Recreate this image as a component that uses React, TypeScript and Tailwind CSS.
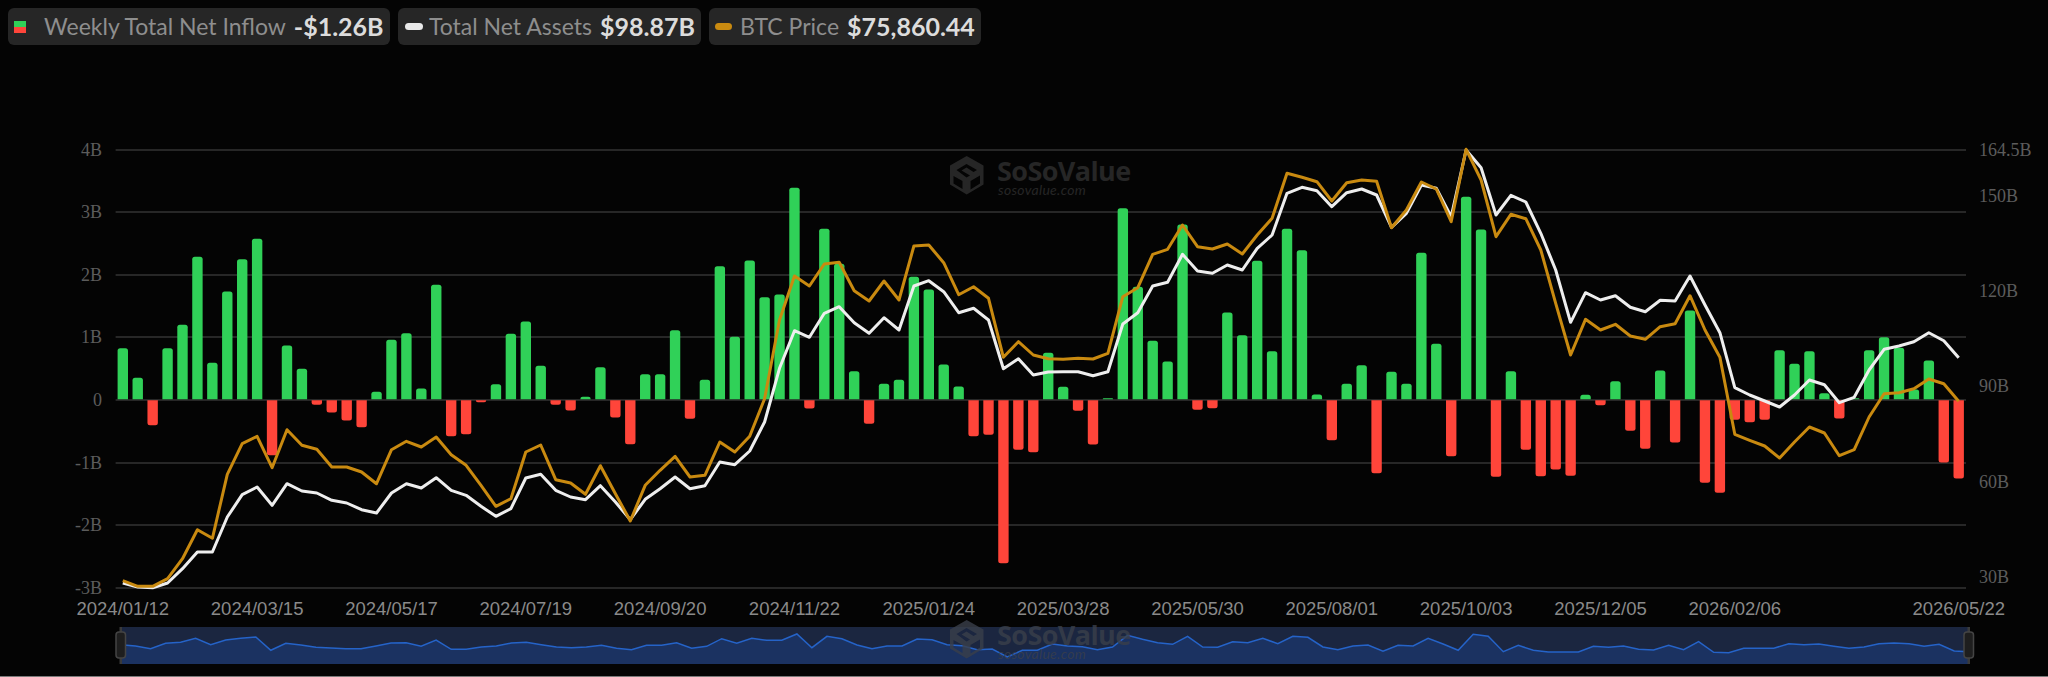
// ETF flow chart panel: legend pills on top, bars + two lines + range slider below.
const X0 = 122.8;
const STEP = 14.926;
const barWidth = 10.4;

// bar heights, measured off the reference at 3x (negative = outflow)
const flows = [
  153, 64, -75, 153, 223, 427, 109, 323, 420, 481, -165, 161, 91, -14, -37, -61, -81, 22, 178, 198,
  32, 343, -108, -102, -6, 45, 196, 233, 100, -14, -31, 7, 96, -52, -132, 75, 75, 207, -56, 58,
  399, 187, 416, 306, 314, 634, -25, 511, 406, 84, -71, 46, 58, 367, 329, 104, 38, -108, -104, -489,
  -149, -156, 139, 37, -32, -133, 3, 573, 337, 175, 113, 524, -29, -24, 260, 192, 415, 144, 511, 447,
  14, -120, 46, 102, -219, 82, 46, 439, 166, -168, 607, 509, -230, 84, -149, -228, -208, -227, 13, -15,
  54, -92, -146, 86, -127, 266, -248, -278, -59, -66, -59, 147, 106, 144, 18, -55, 3, 147, 186, 154,
  29, 116, -187, -235,
];

const low = (v: number) => v / 3 + 377;
const high = (v: number) => v / 3 + 120;

const assets = [
  ...[
    618, 630, 632, 618, 575, 525, 525, 420, 353, 330, 385, 320, 342, 348, 370, 378, 398, 408, 348, 320,
    333, 302, 340, 355, 388, 418, 395, 303, 292, 340, 360, 368, 326, 375, 428, 367, 335, 300, 335, 326,
    255, 263, 222, 135,
  ].map(low),
  ...[
    745, 632, 652, 580, 560, 608, 640, 593, 630, 498, 482, 515, 578, 565, 600, 746, 716, 765, 756, 755,
    755, 767, 755, 612, 578, 498, 487, 403, 453, 460, 435, 450, 385, 345, 220, 202, 212, 260, 218, 207,
    225, 322, 280, 195, 205, 290, 90, 143, 285, 226, 246, 340, 450, 607, 518, 540, 527, 562, 575, 541,
    543, 468, 555, 638, 803, 825, 843, 861, 825, 780, 794, 848, 832, 750, 688, 678, 665, 638, 662, 713,
  ].map(high),
];

const btc = [
  ...[
    611, 628, 628, 605, 545, 458, 484, 292, 200, 178, 272, 158, 205, 217, 270, 270, 285, 320, 218, 193,
    210, 180, 233, 265, 325, 388, 365, 225, 204, 308, 318, 352, 266, 350, 432, 325, 280, 238, 300, 295,
    195, 225, 178, 65,
  ].map(low),
  ...[
    600, 468, 498, 432, 427, 512, 543, 483, 540, 378, 375, 428, 524, 500, 535, 712, 665, 705, 716, 718,
    715, 717, 700, 530, 503, 403, 388, 315, 380, 387, 372, 402, 345, 295, 160, 172, 185, 243, 188, 180,
    184, 323, 270, 186, 207, 305, 88, 180, 350, 283, 296, 390, 550, 705, 598, 630, 613, 648, 658, 620,
    611, 527, 630, 712,
  ].map(high),
  ...[172, 190, 207, 243, 195, 150, 168, 236, 218, 120, 50, 47, 35, 6, 20, 73].map(low),
];

const overview = [
  803, 807, 815, 799, 796, 784, 803, 789, 784, 780, 820, 799, 804, 811, 813, 815, 815, 807, 798, 797,
  808, 789, 817, 817, 810, 807, 798, 796, 803, 810, 812, 810, 805, 814, 818, 805, 805, 797, 814, 808,
  785, 799, 784, 790, 790, 771, 812, 778, 785, 804, 815, 807, 807, 786, 788, 803, 806, 818, 816, 840,
  820, 820, 801, 807, 809, 818, 810, 775, 787, 797, 802, 778, 810, 811, 794, 797, 784, 800, 778, 781,
  810, 818, 807, 804, 823, 805, 807, 784, 801, 820, 772, 778, 824, 805, 820, 825, 825, 825, 808, 811,
  807, 817, 819, 805, 818, 794, 826, 827, 814, 814, 814, 800, 803, 801, 808, 814, 810, 800, 798, 800,
  808, 802, 822, 824,
].map(low);

const grid = [150, 212, 275, 337, 400, 463, 525, 588];
const leftTicks = ["4B", "3B", "2B", "1B", "0", "-1B", "-2B", "-3B"];
const rightTicks: [string, number][] = [
  ["164.5B", 150],
  ["150B", 196],
  ["120B", 291],
  ["90B", 386],
  ["60B", 482],
  ["30B", 577],
];
const dates: [string, number][] = [
  ["2024/01/12", 0],
  ["2024/03/15", 9],
  ["2024/05/17", 18],
  ["2024/07/19", 27],
  ["2024/09/20", 36],
  ["2024/11/22", 45],
  ["2025/01/24", 54],
  ["2025/03/28", 63],
  ["2025/05/30", 72],
  ["2025/08/01", 81],
  ["2025/10/03", 90],
  ["2025/12/05", 99],
  ["2026/02/06", 108],
  ["2026/05/22", 123],
];

const xAt = (i: number) => X0 + STEP * i;
const toPoints = (ys: number[]) => ys.map((y, i) => `${xAt(i).toFixed(1)},${y.toFixed(1)}`).join(" ");
const overviewPoints = overview.map((y, i) => `${(120.5 + 15.03 * i).toFixed(1)},${y.toFixed(1)}`).join(" ");

function barPath(x: number, h: number) {
  const left = x - barWidth / 2;
  const right = x + barWidth / 2;
  const r = Math.min(2.5, Math.abs(h));
  if (h >= 0) {
    const top = 399.2 - h;
    return `M${left} 399.2V${top + r}Q${left} ${top} ${left + r} ${top}H${right - r}Q${right} ${top} ${right} ${top + r}V399.2Z`;
  }
  const bottom = 400.2 - h;
  return `M${left} 400.2V${bottom - r}Q${left} ${bottom} ${left + r} ${bottom}H${right - r}Q${right} ${bottom} ${right} ${bottom - r}V400.2Z`;
}

// cube logo: outer hexagon with the S faces cut out, so it works on any backdrop
const cube =
  "M966.7 156L983.5 165.5V184.5L966.7 194.5L950 184.5V165.5Z" +
  "M953.5 176L962.5 181V189L953.5 183.5Z" +
  "M970.5 181L980 175.5V183.5L970.5 189.5Z" +
  "M956.5 170L966.5 164L977 170L973.5 172L966.5 167.5L961.5 170.5L970 175.5L966.5 177.5Z";

function Watermark({ dy, fill, opacity }: { dy: number; fill: string; opacity: number }) {
  return (
    <g transform={`translate(0 ${dy})`} opacity={opacity}>
      <path d={cube} fill={fill} fillRule="evenodd" />
      <text x="997" y="180.5" fill={fill} className="font-['Open_Sans'] text-[27px] font-bold tracking-[-0.6px]">
        SoSoValue
      </text>
      <text x="998" y="195" fill={fill} className="font-['Lato'] text-[14px] italic tracking-[0.3px]">
        sosovalue.com
      </text>
    </g>
  );
}

function Handle({ x }: { x: number }) {
  return (
    <g>
      <rect x={x - 1} y={627} width={2.5} height={37} fill="#3a3a3a" />
      <rect x={x - 4.5} y={632} width={9.5} height={26} rx={3} fill="#1e1e1e" stroke="#444444" strokeWidth={1.5} />
    </g>
  );
}

function LegendPill({ swatch, label, value, className }: {
  swatch: React.ReactNode;
  label: string;
  value: string;
  className: string;
}) {
  return (
    <div className={`flex h-[37px] items-center rounded-md bg-[#262626] ${className}`}>
      {swatch}
      <span className="text-[23px] text-[#8e8e8e]">{label}</span>
      <span className="ml-2 text-[25px] font-bold text-[#dcdcdc]">{value}</span>
    </div>
  );
}

export default function App() {
  return (
    <div className="flex h-[677px] w-full flex-col overflow-hidden border-b border-[#7a7a7a] bg-[#040404] font-['Lato',sans-serif]">
      <div className="flex h-[45px] shrink-0 items-start gap-2 px-2 pt-2">
        <LegendPill
          className="w-[382px] pl-1.5"
          swatch={
            <span className="mr-[18px] flex h-3 w-3 flex-col">
              <span className="h-1.5 bg-[#30d158]" />
              <span className="h-1.5 bg-[#ff453a]" />
            </span>
          }
          label="Weekly Total Net Inflow"
          value="-$1.26B"
        />
        <LegendPill
          className="w-[303px] pl-[7px]"
          swatch={<span className="mr-1.5 h-[7px] w-[18px] rounded-sm bg-[#e8e8e8]" />}
          label="Total Net Assets"
          value="$98.87B"
        />
        <LegendPill
          className="w-[272px] pl-1.5"
          swatch={<span className="mr-2 h-[7px] w-[17px] rounded-sm bg-[#c98a10]" />}
          label="BTC Price"
          value="$75,860.44"
        />
      </div>

      <svg viewBox="0 45 2048 631" className="block h-[631px] w-[2048px] shrink-0">
        {grid.map((y) => (
          <line key={y} x1={115.6} x2={1966} y1={y} y2={y} stroke="#333333" strokeWidth={1.5} />
        ))}
        <Watermark dy={0} fill="#262626" opacity={1} />

        {leftTicks.map((t, i) => (
          <text
            key={t}
            x={102}
            y={grid[i] + 6}
            textAnchor="end"
            className="fill-[#5c5c5c] font-['Liberation_Serif'] text-[18px]"
          >
            {t}
          </text>
        ))}
        {rightTicks.map(([t, y]) => (
          <text key={t} x={1979} y={y + 6} className="fill-[#5c5c5c] font-['Liberation_Serif'] text-[18px]">
            {t}
          </text>
        ))}

        {flows.map((h, i) => (
          <path key={i} d={barPath(xAt(i), h / 3)} fill={h >= 0 ? "#30d158" : "#ff453a"} />
        ))}

        <polyline points={toPoints(assets)} fill="none" stroke="#eeeeee" strokeWidth={3} strokeLinejoin="round" />
        <polyline points={toPoints(btc)} fill="none" stroke="#c98a10" strokeWidth={3} strokeLinejoin="round" />

        {dates.map(([d, i]) => (
          <text
            key={d}
            x={xAt(i)}
            y={614.5}
            textAnchor="middle"
            className="fill-[#8a8a8a] font-['Liberation_Sans'] text-[18.5px]"
          >
            {d}
          </text>
        ))}

        <rect x={120.5} y={627} width={1848.5} height={37} fill="#1b2640" />
        <polygon points={`120.5,664 ${overviewPoints} 1969,664`} fill="#1b3261" />
        <polyline points={overviewPoints} fill="none" stroke="#2563c8" strokeWidth={1.5} />
        <Watermark dy={464} fill="#3a3f4a" opacity={0.8} />
        <Handle x={120.5} />
        <Handle x={1968.5} />
      </svg>
    </div>
  );
}
